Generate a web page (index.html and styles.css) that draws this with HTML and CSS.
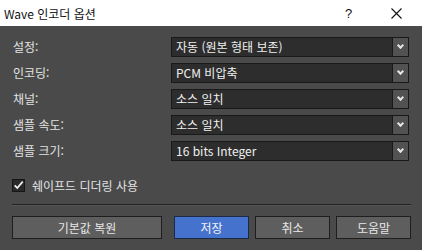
FILE: index.html
```html
<!DOCTYPE html>
<html lang="ko">
<head>
    <meta charset="UTF-8">
    <title>Wave 인코더 옵션</title>
    <link rel="stylesheet" href="styles.css">
</head>
<body>

    <!-- Title bar -->
    <div class="titlebar">
        <span class="title">Wave 인코더 옵션</span>
        <span class="help">?</span>
        <span class="close">
            <svg width="11" height="11" viewBox="0 0 11 11">
                <path d="M0.5 0.5 L10.5 10.5 M10.5 0.5 L0.5 10.5" stroke="#111" stroke-width="1.1" fill="none"/>
            </svg>
        </span>
    </div>

    <div class="content">
        <!-- Settings rows -->
        <div class="rows">
            <div class="label">설정:</div>
            <div class="combo"><span class="value">자동 (원본 형태 보존)</span><span class="arrow"></span></div>

            <div class="label">인코딩:</div>
            <div class="combo"><span class="value">PCM 비압축</span><span class="arrow"></span></div>

            <div class="label">채널:</div>
            <div class="combo"><span class="value">소스 일치</span><span class="arrow"></span></div>

            <div class="label">샘플 속도:</div>
            <div class="combo"><span class="value">소스 일치</span><span class="arrow"></span></div>

            <div class="label">샘플 크기:</div>
            <div class="combo"><span class="value">16 bits Integer</span><span class="arrow"></span></div>
        </div>

        <!-- Dither option -->
        <label class="check-row">
            <span class="checkbox">
                <svg width="13" height="12" viewBox="0 0 13 12">
                    <path d="M2 6.5 L5 9.5 L11.5 2" stroke="#f2f2f2" stroke-width="2" fill="none"/>
                </svg>
            </span>
            <span>쉐이프드 디더링 사용</span>
        </label>

        <div class="separator"></div>

        <!-- Buttons -->
        <div class="buttons">
            <button class="btn btn-wide">기본값 복원</button>
            <button class="btn btn-primary">저장</button>
            <button class="btn">취소</button>
            <button class="btn">도움말</button>
        </div>
    </div>

</body>
</html>
```

FILE: styles.css
```css
/* General styles */
body {
    margin: 0;
    width: 422px;
    height: 250px;
    overflow: hidden;
    background-color: #4a4a4a;
    font-family: 'Noto Sans CJK KR', 'Noto Sans', sans-serif;
    font-size: 12px;
    color: #e2e2e2;
}

/* Title bar */
.titlebar {
    height: 26px;
    background-color: #fff;
    color: #111;
    display: flex;
    align-items: center;
    padding-left: 4px;
}

.title {
    flex: 1;
    font-size: 12px;
}

.help {
    width: 10px;
    margin-right: 36px;
    font-family: 'Liberation Sans', sans-serif;
    font-size: 13px;
}

.close {
    display: flex;
    margin-right: 20px;
}

/* Content */
.content {
    padding: 11px 11px 0 12px;
}

.rows {
    display: grid;
    grid-template-columns: 159px 238px;
    row-gap: 6px;
}

.label {
    height: 20px;
    line-height: 20px;
    padding-left: 1px;
}

/* Combo box */
.combo {
    height: 20px;
    box-sizing: border-box;
    display: flex;
    border: 1px solid #191919;
    background-color: #2d2d2d;
}

.value {
    flex: 1;
    line-height: 18px;
    padding-left: 4px;
    color: #f0f0f0;
    border-right: 1px solid #191919;
}

.arrow {
    width: 15px;
    background-color: #525252;
    position: relative;
}

.arrow::after {
    content: '';
    position: absolute;
    left: 5px;
    top: 5px;
    width: 3px;
    height: 3px;
    border-right: 2px solid #e6e6e6;
    border-bottom: 2px solid #e6e6e6;
    transform: rotate(45deg);
}

/* Checkbox row */
.check-row {
    display: flex;
    align-items: center;
    gap: 7px;
    margin-top: 17px;
    height: 14px;
}

.checkbox {
    width: 13px;
    height: 13px;
    box-sizing: border-box;
    border: 1px solid #161616;
    background-color: #2a2a2a;
    display: flex;
    align-items: center;
    justify-content: center;
}

.separator {
    margin-top: 12px;
    height: 1px;
    background-color: #232323;
    border-bottom: 1px solid #555;
}

/* Buttons */
.buttons {
    display: flex;
    gap: 6px;
    margin-top: 10px;
}

.btn {
    width: 75px;
    height: 23px;
    box-sizing: border-box;
    border: 1px solid #1e1e1e;
    background-color: #5e5e5e;
    color: #e6e6e6;
    font-family: 'Noto Sans CJK KR', 'Noto Sans', sans-serif;
    font-size: 12px;
    padding: 0;
}

.btn-wide {
    width: 150px;
    margin-right: 6px;
}

.btn-primary {
    background-color: #4472cc;
    border-color: #1c2a46;
    color: #f4f4f4;
}
```
